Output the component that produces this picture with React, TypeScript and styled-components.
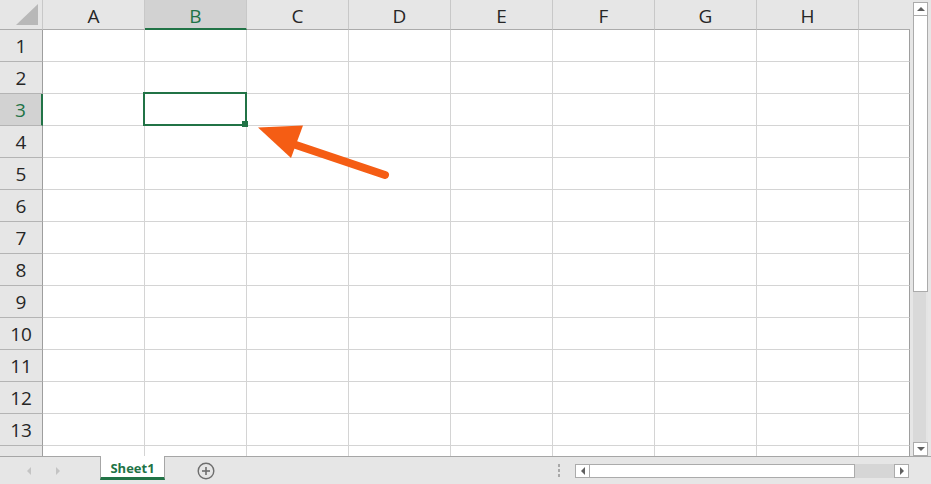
import styled, { createGlobalStyle } from 'styled-components';

const GREEN = '#217346';

const GlobalStyle = createGlobalStyle`
  html, body { margin: 0; padding: 0; background: #e6e6e6; }
  body { font-family: "Open Sans", "Noto Sans", sans-serif; }
  * { box-sizing: border-box; }
`;

const Frame = styled.div`
  width: 931px;
  height: 484px;
  display: grid;
  grid-template-columns: 910px 21px;
  grid-template-rows: 456px 28px;
  background: #e6e6e6;
  overflow: hidden;
`;

const SheetWrap = styled.div`
  position: relative;
  overflow: hidden;
`;

const Sheet = styled.div`
  display: grid;
  grid-template-columns: 43px repeat(8, 102px) 1fr;
  grid-template-rows: 30px repeat(14, 32px);
  width: 910px;
`;

const Corner = styled.div`
  background: #e6e6e6;
  border-right: 1px solid #c8c8c8;
  border-bottom: 1px solid #ababab;
  display: flex;
  align-items: flex-end;
  justify-content: flex-end;
  padding: 0 4px 4px 0;
`;

const CornerTriangle = styled.div`
  width: 22px;
  height: 21px;
  background: #b8b8b8;
  clip-path: polygon(100% 0, 100% 100%, 0 100%);
`;

const ColHeader = styled.div<{ $active?: boolean; $last?: boolean }>`
  display: flex;
  align-items: center;
  justify-content: center;
  padding-top: 3px;
  font-size: 19px;
  color: ${p => (p.$active ? GREEN : '#262626')};
  background: ${p => (p.$active ? '#d2d2d2' : '#e6e6e6')};
  border-right: ${p => (p.$last ? 'none' : '1px solid #c8c8c8')};
  border-bottom: ${p => (p.$active ? `2px solid ${GREEN}` : '1px solid #ababab')};
`;

const RowHeader = styled.div<{ $active?: boolean }>`
  display: flex;
  align-items: center;
  justify-content: center;
  font-size: 19px;
  color: ${p => (p.$active ? GREEN : '#262626')};
  background: ${p => (p.$active ? '#d2d2d2' : '#e6e6e6')};
  border-right: ${p => (p.$active ? `2px solid ${GREEN}` : '1px solid #9e9e9e')};
  border-bottom: 1px solid #b4b4b4;
`;

const Cell = styled.div<{ $selected?: boolean; $last?: boolean }>`
  position: relative;
  background: #fff;
  border-right: 1px solid ${p => (p.$last ? '#9e9e9e' : '#d4d4d4')};
  border-bottom: 1px solid #d4d4d4;
  z-index: ${p => (p.$selected ? 2 : 0)};

  ${p =>
    p.$selected &&
    `
    &::after {
      content: '';
      position: absolute;
      top: -2px;
      left: -2px;
      right: -1px;
      bottom: -1px;
      border: 2px solid ${GREEN};
    }
    &::before {
      content: '';
      position: absolute;
      right: -2px;
      bottom: -2px;
      width: 6px;
      height: 6px;
      background: ${GREEN};
      z-index: 1;
    }
  `}
`;

const ArrowLayer = styled.svg`
  position: absolute;
  top: 0;
  left: 0;
  pointer-events: none;
  z-index: 5;
`;

const VScroll = styled.div`
  display: flex;
  flex-direction: column;
  padding: 2px 3px 0 3px;
`;

const ScrollButton = styled.div`
  width: 15px;
  height: 14px;
  flex: none;
  background: #fff;
  border: 1px solid #ababab;
  display: flex;
  align-items: center;
  justify-content: center;
`;

const TriUp = styled.div`
  width: 0;
  height: 0;
  border-left: 4px solid transparent;
  border-right: 4px solid transparent;
  border-bottom: 4px solid #606060;
`;

const TriDown = styled.div`
  width: 0;
  height: 0;
  border-left: 4px solid transparent;
  border-right: 4px solid transparent;
  border-top: 4px solid #606060;
`;

const TriLeft = styled.div<{ $color?: string }>`
  width: 0;
  height: 0;
  border-top: 4px solid transparent;
  border-bottom: 4px solid transparent;
  border-right: 4px solid ${p => p.$color || '#606060'};
`;

const TriRight = styled.div<{ $color?: string }>`
  width: 0;
  height: 0;
  border-top: 4px solid transparent;
  border-bottom: 4px solid transparent;
  border-left: 4px solid ${p => p.$color || '#606060'};
`;

const VThumb = styled.div`
  height: 276px;
  flex: none;
  background: #fff;
  border: 1px solid #ababab;
  border-top: none;
`;

const VTrack = styled.div`
  flex: 1;
  background: #d9d9d9;
  border-right: 2px solid #e4e4e4;
`;

const BottomBar = styled.div`
  grid-column: 1 / span 2;
  display: flex;
  align-items: stretch;
  border-top: 1px solid #a6a6a6;
  background: #e6e6e6;
`;

const NavGroup = styled.div`
  width: 100px;
  flex: none;
  display: flex;
  align-items: center;
  gap: 25px;
  padding-left: 27px;
`;

const SheetTab = styled.div`
  width: 65px;
  flex: none;
  height: 24px;
  margin-top: -1px;
  background: #fff;
  border-left: 1px solid #a6a6a6;
  border-right: 1px solid #a6a6a6;
  border-bottom: 3px solid ${GREEN};
  display: flex;
  align-items: center;
  justify-content: center;
  padding-top: 2px;
  font-size: 13px;
  font-weight: 700;
  color: ${GREEN};
`;

const AddWrap = styled.div`
  width: 82px;
  flex: none;
  display: flex;
  align-items: center;
  justify-content: center;
`;

const Spacer = styled.div`
  flex: 1;
`;

const Dots = styled.div`
  display: flex;
  flex-direction: column;
  justify-content: center;
  gap: 2px;
  margin-right: 15px;
`;

const Dot = styled.div`
  width: 2px;
  height: 3px;
  background: #a8a8a8;
`;

const HScroll = styled.div`
  width: 334px;
  height: 14px;
  align-self: center;
  margin-right: 22px;
  display: flex;
`;

const HButton = styled.div`
  width: 15px;
  height: 14px;
  flex: none;
  background: #fff;
  border: 1px solid #ababab;
  display: flex;
  align-items: center;
  justify-content: center;
`;

const HThumb = styled.div`
  width: 265px;
  flex: none;
  background: #fff;
  border: 1px solid #ababab;
  border-left: none;
`;

const HTrack = styled.div`
  flex: 1;
  background: #d6d6d6;
`;

const columns = ['A', 'B', 'C', 'D', 'E', 'F', 'G', 'H', ''];
const rows = Array.from({ length: 14 }, (_, i) => i + 1);

export default function App() {
  return (
    <>
      <GlobalStyle />
      <Frame>
        <SheetWrap>
          <Sheet>
            <Corner>
              <CornerTriangle />
            </Corner>
            {columns.map((c, i) => (
              <ColHeader key={'h' + i} $active={c === 'B'} $last={i === columns.length - 1}>
                {c}
              </ColHeader>
            ))}
            {rows.map(r => (
              <>
                <RowHeader key={'r' + r} $active={r === 3}>
                  {r}
                </RowHeader>
                {columns.map((c, i) => (
                  <Cell
                    key={r + '-' + i}
                    $selected={r === 3 && c === 'B'}
                    $last={i === columns.length - 1}
                  />
                ))}
              </>
            ))}
          </Sheet>
          <ArrowLayer width="910" height="456" viewBox="0 0 910 456">
            <line
              x1="290"
              y1="143"
              x2="385"
              y2="175"
              stroke="#f55d14"
              strokeWidth="8"
              strokeLinecap="round"
            />
            <polygon points="258,127.5 303,125.5 291,158" fill="#f55d14" />
          </ArrowLayer>
        </SheetWrap>

        <VScroll>
          <ScrollButton>
            <TriUp />
          </ScrollButton>
          <VThumb />
          <VTrack />
          <ScrollButton>
            <TriDown />
          </ScrollButton>
        </VScroll>

        <BottomBar>
          <NavGroup>
            <TriLeft $color="#c4c4c4" />
            <TriRight $color="#c4c4c4" />
          </NavGroup>
          <SheetTab>Sheet1</SheetTab>
          <AddWrap>
            <svg width="18" height="18" viewBox="0 0 18 18">
              <circle cx="9" cy="9" r="7.8" fill="none" stroke="#6e6e6e" strokeWidth="1.4" />
              <line x1="9" y1="5" x2="9" y2="13" stroke="#6e6e6e" strokeWidth="1.6" />
              <line x1="5" y1="9" x2="13" y2="9" stroke="#6e6e6e" strokeWidth="1.6" />
            </svg>
          </AddWrap>
          <Spacer />
          <Dots>
            <Dot />
            <Dot />
            <Dot />
          </Dots>
          <HScroll>
            <HButton>
              <TriLeft />
            </HButton>
            <HThumb />
            <HTrack />
            <HButton>
              <TriRight />
            </HButton>
          </HScroll>
        </BottomBar>
      </Frame>
    </>
  );
}
